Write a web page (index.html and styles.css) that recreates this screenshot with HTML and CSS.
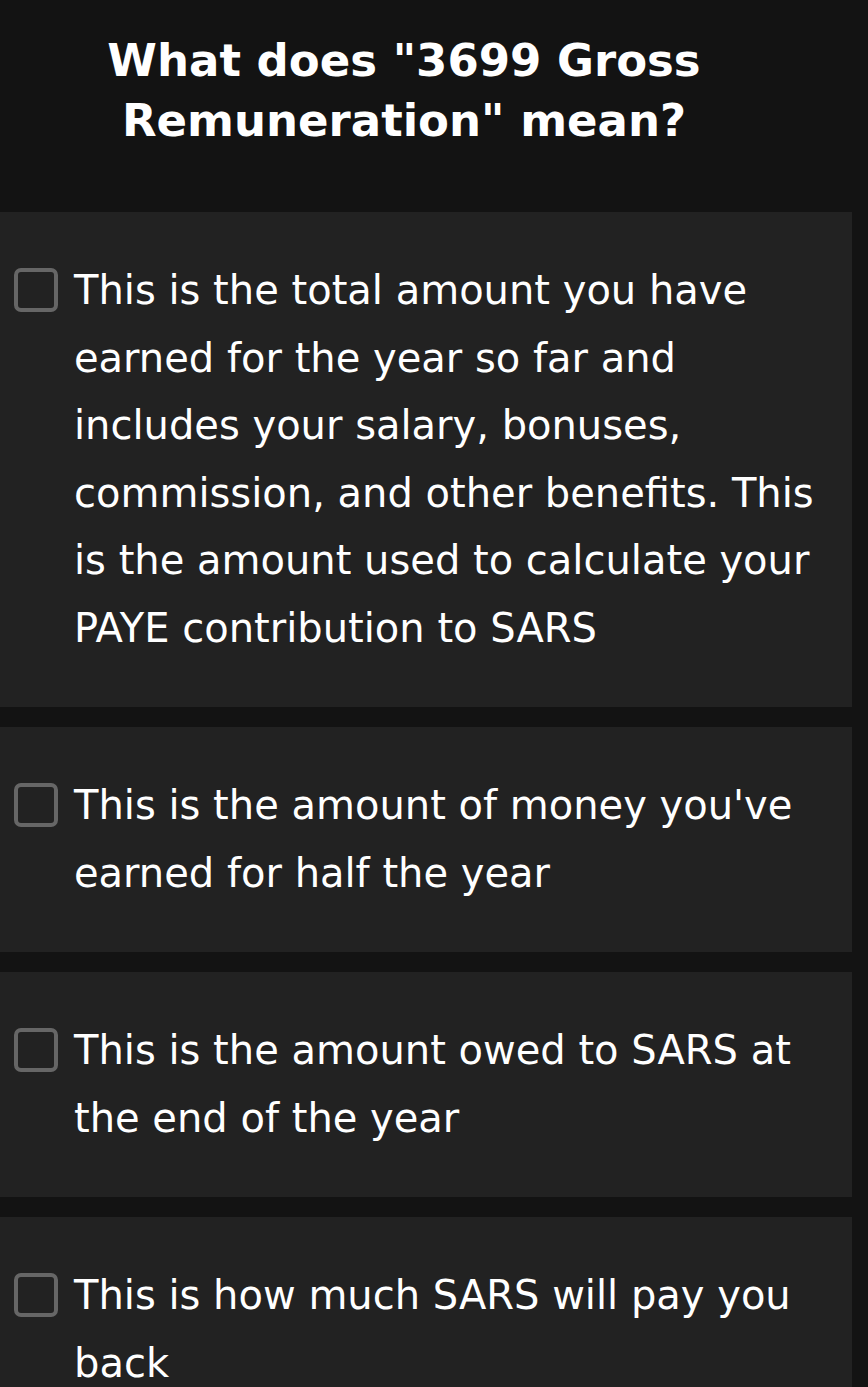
FILE: index.html
```html
<!DOCTYPE html>
<html lang="en">
<head>
    <meta charset="UTF-8">
    <meta name="viewport" content="width=device-width, initial-scale=1.0">
    <title>Quiz - Gross Remuneration</title>
    <link rel="stylesheet" href="styles.css">
</head>
<body>
    <div class="quiz">
        <h2 class="pergunta">What does "3699 Gross Remuneration" mean?</h2>

        <!-- Opções de resposta -->
        <div class="opcoes">
            <label class="opcao">
                <span class="caixa"></span>
                <span class="texto">This is the total amount you have earned for the year so far and includes your salary, bonuses, commission, and other benefits. This is the amount used to calculate your PAYE contribution to SARS</span>
            </label>
            <label class="opcao">
                <span class="caixa"></span>
                <span class="texto">This is the amount of money you've earned for half the year</span>
            </label>
            <label class="opcao">
                <span class="caixa"></span>
                <span class="texto">This is the amount owed to SARS at the end of the year</span>
            </label>
            <label class="opcao">
                <span class="caixa"></span>
                <span class="texto">This is how much SARS will pay you back</span>
            </label>
        </div>
    </div>
</body>
</html>
```

FILE: styles.css
```css
* {
    margin: 0;
    padding: 0;
    box-sizing: border-box;
}

body {
    font-family: 'DejaVu Sans', 'Liberation Sans', sans-serif;
    background-color: #131313;
    color: #ffffff;
}

.pergunta {
    font-size: 45px;
    font-weight: bold;
    line-height: 60px;
    text-align: center;
    padding: 31px 60px 61px 0;
}

.opcoes {
    display: flex;
    flex-direction: column;
    gap: 20px;
    margin-right: 16px;
}

.opcao {
    display: flex;
    align-items: flex-start;
    gap: 16px;
    background-color: #222222;
    padding: 45px 16px 45px 14px;
    font-size: 40px;
    line-height: 67.5px;
    cursor: pointer;
}

.caixa {
    flex-shrink: 0;
    width: 44px;
    height: 44px;
    margin-top: 11px;
    border: 4px solid #666666;
    border-radius: 7px;
    background-color: #222222;
}

.texto {
    flex: 1;
}
```
